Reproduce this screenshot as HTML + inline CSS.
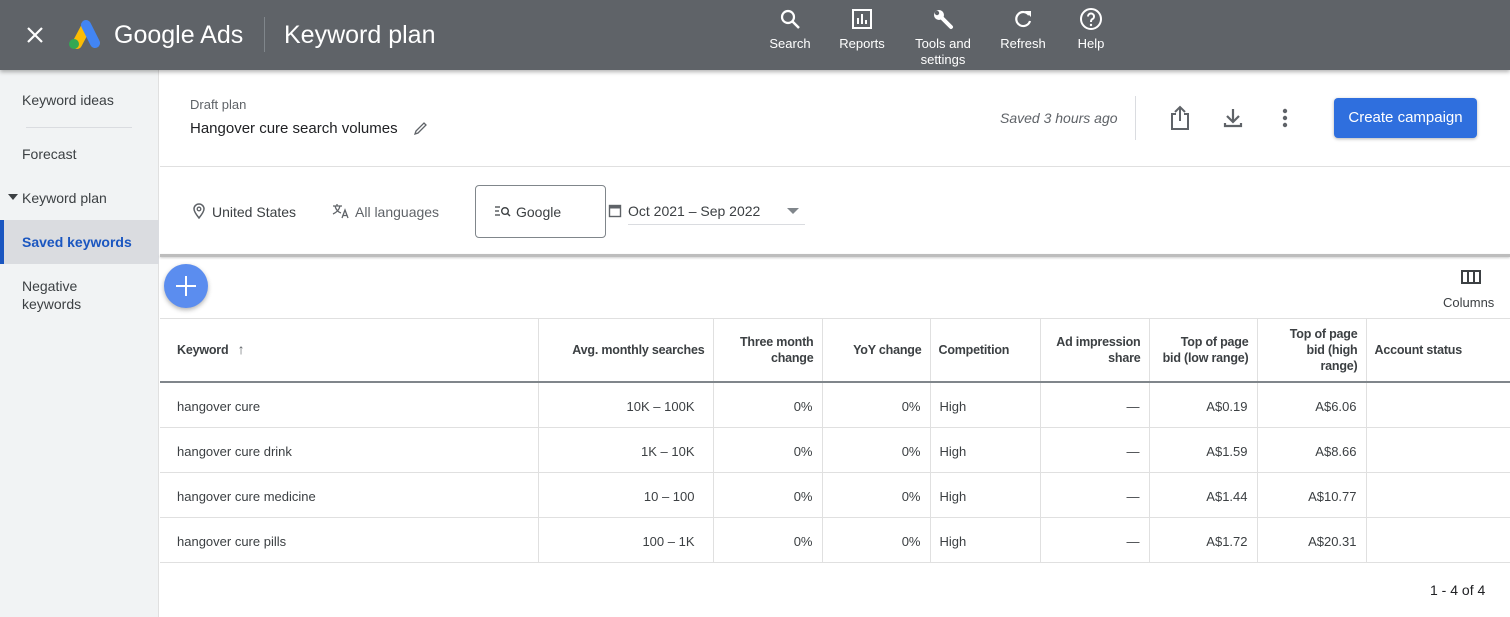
<!DOCTYPE html>
<html><head><meta charset="utf-8"><style>
*{margin:0;padding:0;box-sizing:border-box}
body{width:1510px;height:617px;overflow:hidden;font-family:"Liberation Sans",Arial,sans-serif;background:#fff;position:relative;color:#202124}
.abs{position:absolute}
#hdr{left:0;top:0;width:1510px;height:70px;background:#5f6368;box-shadow:0 2px 4px rgba(0,0,0,.3);z-index:5}
.hbtn{position:absolute;top:7px;color:#fff;font-size:13px;text-align:center;line-height:16px}
.hbtn svg{display:block;margin:0 auto 5px}
#side{left:0;top:70px;width:159px;height:547px;background:#f1f3f4;border-right:1px solid #e0e0e0}
.si{position:absolute;left:22px;font-size:14px;color:#3c4043}
table{border-collapse:collapse;position:absolute;left:160px;top:318px;width:1350px;font-size:13px;color:#3c4043;table-layout:fixed}
td,th{border-right:1px solid #e0e0e0;padding:0 9px;text-align:right}
th{height:64px;color:#3c4043;font-size:12.5px;line-height:16px;border-bottom:2px solid #80868b;font-weight:bold;padding:0 8px;letter-spacing:-0.2px}
td{height:45px;border-bottom:1px solid #e0e0e0;padding-top:3px}
td:last-child,th:last-child{border-right:none}
.l{text-align:left}
</style></head><body>
<div id="hdr" class="abs">
 <svg class="abs" style="left:26px;top:26px" width="18" height="18" viewBox="0 0 18 18"><path d="M2 2L16 16M16 2L2 16" stroke="#fff" stroke-width="2.2"/></svg>
 <svg class="abs" style="left:66px;top:19px" width="36" height="31" viewBox="0 0 36 31"><path d="M11 25L20 8" stroke="#fbbc04" stroke-width="10" stroke-linecap="round"/><path d="M20 6L29 24" stroke="#4285f4" stroke-width="10" stroke-linecap="round"/><circle cx="8" cy="25" r="5" fill="#34a853"/></svg>
 <div class="abs" style="left:114px;top:21px;color:#fff;font-size:25px">Google Ads</div>
 <div class="abs" style="left:264px;top:17px;width:1px;height:35px;background:#80868b"></div>
 <div class="abs" style="left:284px;top:21px;color:#fff;font-size:25px">Keyword plan</div>
 <div class="hbtn" style="left:766px;width:48px"><svg width="24" height="24" viewBox="0 0 24 24"><circle cx="10" cy="10" r="6" stroke="#fff" stroke-width="2.2" fill="none"/><path d="M14.5 14.5L21 21" stroke="#fff" stroke-width="2.5"/></svg>Search</div>
 <div class="hbtn" style="left:834px;width:56px"><svg width="24" height="24" viewBox="0 0 24 24"><rect x="3" y="3" width="18" height="18" stroke="#fff" stroke-width="2" fill="none"/><path d="M8 17V11M12 17V7M16 17V13" stroke="#fff" stroke-width="2"/></svg>Reports</div>
 <div class="hbtn" style="left:906px;width:74px"><svg width="24" height="24" viewBox="0 0 24 24"><circle cx="8" cy="8" r="5" fill="#fff"/><circle cx="6" cy="6" r="2.2" fill="#5f6368"/><path d="M10 10L20 20" stroke="#fff" stroke-width="4" stroke-linecap="round"/></svg>Tools and<br>settings</div>
 <div class="hbtn" style="left:996px;width:54px"><svg width="24" height="24" viewBox="0 0 24 24"><path d="M18 8A7 7 0 1 0 19 14" stroke="#fff" stroke-width="2.2" fill="none"/><path d="M14 4H20V10Z" fill="#fff"/></svg>Refresh</div>
 <div class="hbtn" style="left:1070px;width:42px"><svg width="24" height="24" viewBox="0 0 24 24"><circle cx="12" cy="12" r="10" stroke="#fff" stroke-width="2" fill="none"/><path d="M9 9.5A3 3 0 1 1 13 12.3C12 13 12 13.5 12 15" stroke="#fff" stroke-width="2" fill="none"/><circle cx="12" cy="18" r="1.2" fill="#fff"/></svg>Help</div>
</div>
<div id="side" class="abs">
 <div class="si" style="top:22px">Keyword ideas</div>
 <div class="abs" style="left:26px;top:57px;width:106px;height:1px;background:#dadce0"></div>
 <div class="si" style="top:76px">Forecast</div>
 <div class="abs" style="left:8px;top:124px;width:0;height:0;border-left:5px solid transparent;border-right:5px solid transparent;border-top:6px solid #3c4043"></div>
 <div class="si" style="top:120px">Keyword plan</div>
 <div class="abs" style="left:0;top:150px;width:159px;height:44px;background:#dadce0;border-left:4px solid #1a56c0"></div>
 <div class="si" style="top:164px;color:#1a56c0;font-weight:bold">Saved keywords</div>
 <div class="si" style="top:207px;line-height:18px">Negative<br>keywords</div>
</div>
<div class="abs" style="left:190px;top:97px;font-size:13px;color:#5f6368">Draft plan</div>
<div class="abs" style="left:190px;top:120px;font-size:15px;color:#202124">Hangover cure search volumes</div>
<svg class="abs" style="left:413px;top:121px" width="15" height="15" viewBox="0 0 15 15"><path d="M2 13L3 10L11 2L13 4L5 12Z" stroke="#5f6368" stroke-width="1.3" fill="none"/></svg>
<div class="abs" style="left:1000px;top:110px;font-size:14px;color:#5f6368;font-style:italic">Saved 3 hours ago</div>
<div class="abs" style="left:1135px;top:96px;width:1px;height:44px;background:#dadce0"></div>
<svg class="abs" style="left:1169px;top:105px" width="22" height="26" viewBox="0 0 22 26"><path d="M7 9H3V24H19V9H15M11 16V2M6 7L11 2L16 7" stroke="#5f6368" stroke-width="2" fill="none"/></svg>
<svg class="abs" style="left:1222px;top:107px" width="22" height="22" viewBox="0 0 22 22"><path d="M11 2V14M5 9L11 15L17 9M3 16V19H19V16" stroke="#5f6368" stroke-width="2.2" fill="none"/></svg>
<svg class="abs" style="left:1280px;top:108px" width="10" height="20" viewBox="0 0 10 20"><circle cx="5" cy="3" r="2.2" fill="#5f6368"/><circle cx="5" cy="10" r="2.2" fill="#5f6368"/><circle cx="5" cy="17" r="2.2" fill="#5f6368"/></svg>
<div class="abs" style="left:1334px;top:98px;width:143px;height:40px;background:#2f6fde;border-radius:4px;box-shadow:0 1px 3px rgba(0,0,0,.3);color:#fff;font-size:15px;text-align:center;line-height:40px">Create campaign</div>
<div class="abs" style="left:160px;top:166px;width:1350px;height:1px;background:#e0e0e0"></div>
<svg class="abs" style="left:192px;top:203px" width="14" height="16" viewBox="0 0 14 16"><path d="M7 15C3 10 2 8 2 6A5 5 0 0 1 12 6C12 8 11 10 7 15Z" stroke="#5f6368" stroke-width="1.5" fill="none"/><circle cx="7" cy="6" r="1.8" stroke="#5f6368" stroke-width="1.3" fill="none"/></svg>
<div class="abs" style="left:212px;top:204px;font-size:14px;color:#3c4043">United States</div>
<svg class="abs" style="left:332px;top:203px" width="18" height="16" viewBox="0 0 18 16"><path d="M1 3H10M5 1V3M3 3C4 7 6 9 9 10M8 3C7 7 5 9 1 11" stroke="#5f6368" stroke-width="1.3" fill="none"/><path d="M10 15L13 7L16 15M11 12.5H15" stroke="#5f6368" stroke-width="1.3" fill="none"/></svg>
<div class="abs" style="left:355px;top:204px;font-size:14px;color:#5f6368">All languages</div>
<div class="abs" style="left:475px;top:185px;width:131px;height:53px;border:1px solid #80868b;border-radius:4px"></div>
<svg class="abs" style="left:494px;top:205px" width="17" height="12" viewBox="0 0 17 12"><path d="M1 2H6M1 6H5M1 10H6" stroke="#3c4043" stroke-width="1.3"/><circle cx="11" cy="6" r="3.3" stroke="#3c4043" stroke-width="1.4" fill="none"/><path d="M13.3 8.3L16 11" stroke="#3c4043" stroke-width="1.5"/></svg>
<div class="abs" style="left:516px;top:204px;font-size:14px;color:#3c4043">Google</div>
<svg class="abs" style="left:608px;top:203px" width="14" height="15" viewBox="0 0 14 15"><rect x="1.5" y="2.5" width="11" height="11" stroke="#5f6368" stroke-width="1.4" fill="none"/><rect x="1.5" y="2.5" width="11" height="3" fill="#5f6368"/></svg>
<div class="abs" style="left:628px;top:203px;font-size:14px;color:#3c4043">Oct 2021 – Sep 2022</div>
<div class="abs" style="left:787px;top:208px;border-left:6px solid transparent;border-right:6px solid transparent;border-top:6px solid #80868b"></div>
<div class="abs" style="left:628px;top:224px;width:177px;height:1px;background:#dadce0"></div>
<div class="abs" style="left:160px;top:254px;width:1350px;height:3px;background:#bdbdbd;box-shadow:0 1px 2px rgba(0,0,0,.2)"></div>
<div class="abs" style="left:164px;top:264px;width:44px;height:44px;border-radius:50%;background:#5b8def;box-shadow:0 2px 5px rgba(0,0,0,.3)"></div>
<div class="abs" style="left:176px;top:285px;width:20px;height:2px;background:#fff"></div>
<div class="abs" style="left:185px;top:276px;width:2px;height:20px;background:#fff"></div>
<svg class="abs" style="left:1461px;top:269px" width="20" height="16" viewBox="0 0 20 16"><rect x="1" y="2" width="18" height="12" stroke="#3c4043" stroke-width="2" fill="none"/><path d="M7 2V14M13 2V14" stroke="#3c4043" stroke-width="2"/></svg>
<div class="abs" style="left:1443px;top:295px;font-size:13px;color:#3c4043">Columns</div>
<div class="abs" style="left:160px;top:318px;width:1350px;height:1px;background:#e0e0e0"></div>
<table>
<colgroup><col style="width:378px"><col style="width:175px"><col style="width:109px"><col style="width:108px"><col style="width:110px"><col style="width:109px"><col style="width:108px"><col style="width:109px"><col></colgroup>
<tr><th class="l" style="padding-left:17px">Keyword <span style="font-weight:normal;color:#5f6368;margin-left:6px;font-size:14px">↑</span></th><th>Avg. monthly searches</th><th>Three month<br>change</th><th>YoY change</th><th class="l">Competition</th><th>Ad impression<br>share</th><th>Top of page<br>bid (low range)</th><th>Top of page<br>bid (high<br>range)</th><th class="l">Account status</th></tr>
<tr><td class="l" style="padding-left:17px">hangover cure</td><td style="padding-right:18px">10K – 100K</td><td>0%</td><td>0%</td><td class="l">High</td><td>—</td><td>A$0.19</td><td>A$6.06</td><td></td></tr>
<tr><td class="l" style="padding-left:17px">hangover cure drink</td><td style="padding-right:18px">1K – 10K</td><td>0%</td><td>0%</td><td class="l">High</td><td>—</td><td>A$1.59</td><td>A$8.66</td><td></td></tr>
<tr><td class="l" style="padding-left:17px">hangover cure medicine</td><td style="padding-right:18px">10 – 100</td><td>0%</td><td>0%</td><td class="l">High</td><td>—</td><td>A$1.44</td><td>A$10.77</td><td></td></tr>
<tr><td class="l" style="padding-left:17px">hangover cure pills</td><td style="padding-right:18px">100 – 1K</td><td>0%</td><td>0%</td><td class="l">High</td><td>—</td><td>A$1.72</td><td>A$20.31</td><td></td></tr>
</table>
<div class="abs" style="left:1430px;top:582px;font-size:14px;color:#202124">1 - 4 of 4</div>
</body></html>
